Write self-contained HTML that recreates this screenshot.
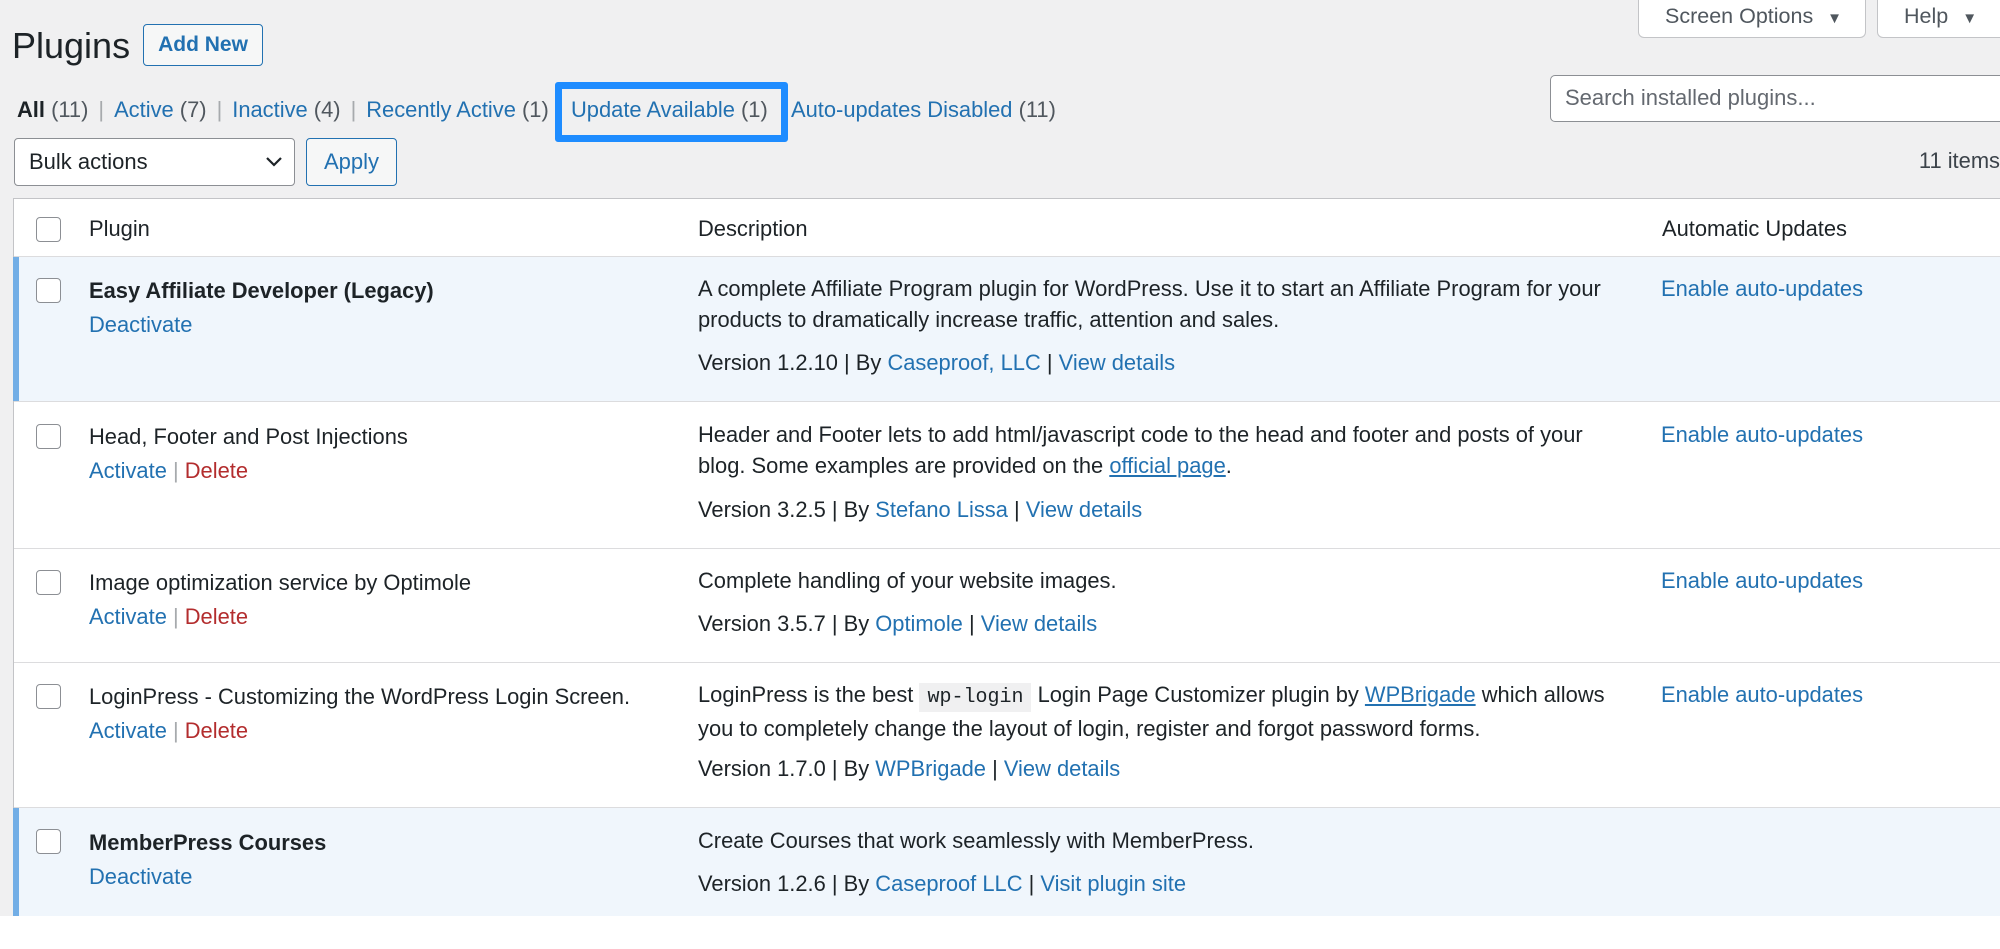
<!DOCTYPE html>
<html><head><meta charset="utf-8"><style>
*{box-sizing:border-box;margin:0;padding:0}
body{width:2000px;height:949px;overflow:hidden;background:#f0f0f1;font-family:"Liberation Sans",Arial,sans-serif;color:#1d2327;font-size:21.9px;position:relative}
a{color:#2271b1;text-decoration:none}
.abs{position:absolute;white-space:nowrap}
.tab{position:absolute;top:-6px;height:44px;background:#fff;border:1.5px solid #c3c4c7;border-top:none;border-radius:0 0 6px 6px;color:#50575e;font-size:21.5px;line-height:44px;padding-left:26px}
.sep{color:#a7aaad;padding:0 10px}
.cnt{color:#50575e}
.table{position:absolute;left:13px;top:198px;width:2000px;height:718px;background:#fff;border:1.5px solid #c3c4c7;border-right:none}
.row{position:absolute;left:0;width:100%;border-top:1.5px solid #dcdcde}
.row.act{background:#f0f6fc}
.row.act::before{content:"";position:absolute;left:-1.5px;top:0;bottom:0;width:6px;background:#72aee6}
.cb{position:absolute;left:22px;width:25px;height:25px;border:1.5px solid #8c8f94;border-radius:4px;background:#fff}
.t{position:absolute;line-height:31px;white-space:nowrap}
.b{font-weight:bold}
.del{color:#b32d2e}
.gr{color:#a7aaad}
code{font-family:"Liberation Mono",monospace;background:#f0f0f1;padding:3px 8px;font-size:20px}
u{text-decoration:underline}
</style></head><body>
<div class="tab" style="left:1638px;width:228px">Screen Options <span style="font-size:15px;margin-left:8px">▼</span></div>
<div class="tab" style="left:1877px;width:140px">Help <span style="font-size:15px;margin-left:8px">▼</span></div>

<div class="abs" style="left:12px;top:22px;font-size:36px;line-height:48px;color:#1d2327">Plugins</div>
<div class="abs" style="left:143px;top:24px;width:120px;height:42px;border:1.5px solid #2271b1;border-radius:4px;background:#f6f7f7;color:#2271b1;font-size:21px;font-weight:bold;line-height:39px;text-align:center">Add New</div>

<div class="abs" style="left:17px;top:95px;line-height:30px"><b style="color:#1d2327">All</b> <span class="cnt">(11)</span><span class="sep">|</span><a>Active</a> <span class="cnt">(7)</span><span class="sep">|</span><a>Inactive</a> <span class="cnt">(4)</span><span class="sep">|</span><a>Recently Active</a> <span class="cnt">(1)</span></div>
<div class="abs" style="left:555px;top:82px;width:233px;height:60px;border:7px solid #1e8cff;border-radius:3px"></div>
<div class="abs" style="left:571px;top:95px;line-height:30px"><a>Update Available</a> <span class="cnt">(1)</span></div>
<div class="abs" style="left:791px;top:95px;line-height:30px"><a>Auto-updates Disabled</a> <span class="cnt">(11)</span></div>

<div class="abs" style="left:1550px;top:75px;width:460px;height:47px;background:#fff;border:1.5px solid #8c8f94;border-radius:5px;color:#646970;font-size:22px;line-height:44px;padding-left:14px">Search installed plugins...</div>

<div class="abs" style="left:14px;top:138px;width:281px;height:48px;background:#fff;border:1.5px solid #8c8f94;border-radius:4px;line-height:45px;padding-left:14px;font-size:22px">Bulk actions
<svg style="position:absolute;left:250px;top:17px" width="18" height="12" viewBox="0 0 18 12"><path d="M2 2l7 7 7-7" fill="none" stroke="#1d2327" stroke-width="2.2"/></svg></div>
<div class="abs" style="left:306px;top:138px;width:91px;height:48px;border:1.5px solid #2271b1;border-radius:4px;background:#f6f7f7;color:#2271b1;line-height:45px;text-align:center;font-size:22px">Apply</div>
<div class="abs" style="right:0;top:146px;line-height:30px;color:#3c434a">11 items</div>

<div class="table">
  <div class="cb" style="top:18px"></div>
  <div class="t" style="left:75px;top:14px">Plugin</div>
  <div class="t" style="left:684px;top:14px">Description</div>
  <div class="t" style="left:1648px;top:14px">Automatic Updates</div>

  <div class="row act" style="top:57px;height:145px">
    <div class="cb" style="top:21px"></div>
    <div class="t b" style="left:75px;top:18px">Easy Affiliate Developer (Legacy)</div>
    <div class="t" style="left:75px;top:52px"><a>Deactivate</a></div>
    <div class="t" style="left:684px;top:16px">A complete Affiliate Program plugin for WordPress. Use it to start an Affiliate Program for your<br>products to dramatically increase traffic, attention and sales.</div>
    <div class="t" style="left:684px;top:90px">Version 1.2.10 | By <a>Caseproof, LLC</a> | <a>View details</a></div>
    <div class="t" style="left:1647px;top:16px"><a>Enable auto-updates</a></div>
  </div>

  <div class="row" style="top:202px;height:147px">
    <div class="cb" style="top:22px"></div>
    <div class="t" style="left:75px;top:19px">Head, Footer and Post Injections</div>
    <div class="t" style="left:75px;top:53px"><a>Activate</a> <span class="gr">|</span> <a class="del">Delete</a></div>
    <div class="t" style="left:684px;top:17px">Header and Footer lets to add html/javascript code to the head and footer and posts of your<br>blog. Some examples are provided on the <a><u>official page</u></a>.</div>
    <div class="t" style="left:684px;top:92px">Version 3.2.5 | By <a>Stefano Lissa</a> | <a>View details</a></div>
    <div class="t" style="left:1647px;top:17px"><a>Enable auto-updates</a></div>
  </div>

  <div class="row" style="top:349px;height:114px">
    <div class="cb" style="top:21px"></div>
    <div class="t" style="left:75px;top:18px">Image optimization service by Optimole</div>
    <div class="t" style="left:75px;top:52px"><a>Activate</a> <span class="gr">|</span> <a class="del">Delete</a></div>
    <div class="t" style="left:684px;top:16px">Complete handling of your website images.</div>
    <div class="t" style="left:684px;top:59px">Version 3.5.7 | By <a>Optimole</a> | <a>View details</a></div>
    <div class="t" style="left:1647px;top:16px"><a>Enable auto-updates</a></div>
  </div>

  <div class="row" style="top:463px;height:145px">
    <div class="cb" style="top:21px"></div>
    <div class="t" style="left:75px;top:18px">LoginPress - Customizing the WordPress Login Screen.</div>
    <div class="t" style="left:75px;top:52px"><a>Activate</a> <span class="gr">|</span> <a class="del">Delete</a></div>
    <div class="t" style="left:684px;top:16px">LoginPress is the best <code>wp-login</code> Login Page Customizer plugin by <a><u>WPBrigade</u></a> which allows<br>you to completely change the layout of login, register and forgot password forms.</div>
    <div class="t" style="left:684px;top:90px">Version 1.7.0 | By <a>WPBrigade</a> | <a>View details</a></div>
    <div class="t" style="left:1647px;top:16px"><a>Enable auto-updates</a></div>
  </div>

  <div class="row act" style="top:608px;height:110px">
    <div class="cb" style="top:21px"></div>
    <div class="t b" style="left:75px;top:19px">MemberPress Courses</div>
    <div class="t" style="left:75px;top:53px"><a>Deactivate</a></div>
    <div class="t" style="left:684px;top:17px">Create Courses that work seamlessly with MemberPress.</div>
    <div class="t" style="left:684px;top:60px">Version 1.2.6 | By <a>Caseproof LLC</a> | <a>Visit plugin site</a></div>
  </div>
</div>
<div class="abs" style="left:0;top:916px;width:2000px;height:33px;background:#fff"></div>
</body></html>
